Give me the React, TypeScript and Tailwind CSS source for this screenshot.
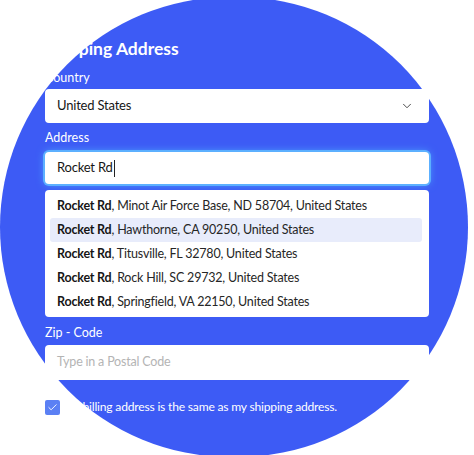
import React from 'react';
import { ChevronDown, Check } from 'lucide-react';

const suggestions = [
  'Minot Air Force Base, ND 58704, United States',
  'Hawthorne, CA 90250, United States',
  'Titusville, FL 32780, United States',
  'Rock Hill, SC 29732, United States',
  'Springfield, VA 22150, United States',
];

const App = () => {
  return (
    <div className="relative w-[474px] h-[455px] overflow-hidden bg-white font-['Lato',sans-serif]">
      {/* Backdrop circle */}
      <div className="absolute left-0 top-[-3px] w-[468px] h-[460px] rounded-full bg-[#3d5bf5]" />

      <div className="relative flex flex-col px-[45px] pt-[38px]">
        <h2 className="text-[17.5px] font-bold text-white leading-[22px]">Shipping Address</h2>

        <label className="mt-[9px] text-[12.5px] text-white leading-[18px]">Country</label>
        <div className="mt-[2px] h-[34px] flex items-center justify-between rounded-[4px] bg-white pl-[12px] pr-[15px]">
          <span className="text-[13px] tracking-[-0.2px] text-[#161616]">United States</span>
          <ChevronDown className="w-[14px] h-[14px] text-[#333]" strokeWidth={1.5} />
        </div>

        <label className="mt-[6px] text-[12.5px] text-white leading-[18px]">Address</label>
        <div className="mt-[5px] h-[32px] flex items-center rounded-[4px] bg-white pl-[12px] ring-2 ring-[#5cb0ff] shadow-[0_0_8px_#4fb0ff]">
          <span className="text-[13px] tracking-[-0.2px] text-[#161616]">Rocket Rd</span>
          <span className="ml-[1px] w-[1px] h-[17px] bg-[#222]" />
        </div>

        <div className="mt-[6px] rounded-[4px] bg-white pt-[4px] pb-[3px] pl-[5px] pr-[7px] flex flex-col">
          {suggestions.map((s, i) => (
            <div
              key={s}
              className={`h-[24px] flex items-center pl-[7px] rounded-[3px] text-[12.5px] tracking-[-0.2px] text-[#262626] whitespace-nowrap ${
                i === 1 ? 'bg-[#e8ecfb]' : ''
              }`}
            >
              <span className="font-bold text-[#161616]">Rocket Rd</span>, {s}
            </div>
          ))}
        </div>

        <label className="mt-[7px] text-[12.5px] text-white leading-[18px]">Zip - Code</label>
        <div className="mt-[3px] h-[35px] flex items-center rounded-[4px] bg-white pl-[12px]">
          <span className="text-[12.5px] tracking-[-0.2px] text-[#b4b4b4]">Type in a Postal Code</span>
        </div>

        <div className="mt-[18px] flex items-center gap-[3px]">
          <span className="w-[15px] h-[15px] flex items-center justify-center rounded-[2px] bg-[#5b80f4]">
            <Check className="w-[11px] h-[11px] text-white" strokeWidth={2} />
          </span>
          <span className="text-[12.1px] tracking-[-0.2px] text-white">My billing address is the same as my shipping address.</span>
        </div>
      </div>
    </div>
  );
};

export default App;
